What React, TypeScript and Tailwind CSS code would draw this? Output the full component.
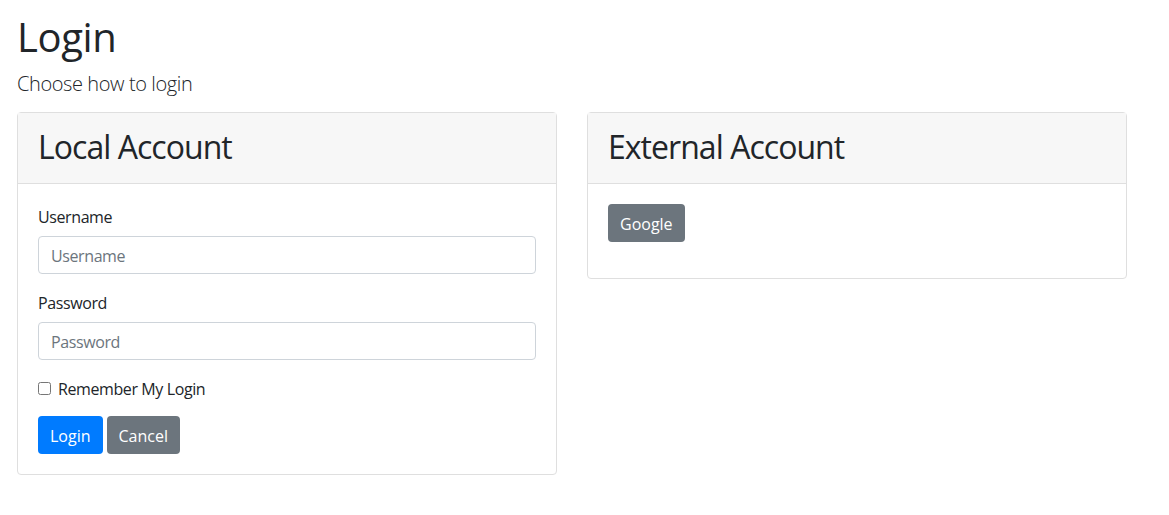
export default function App() {
  return (
    <div className="min-h-screen bg-white px-[17px] pt-[13px] tracking-[-0.025em] text-[#212529] font-['Open_Sans','Liberation_Sans',sans-serif]">
      <h1 className="mb-2 text-[40px] leading-[1.2] font-normal">Login</h1>
      <p className="mb-[13px] text-[20px] leading-[30px] font-light">Choose how to login</p>

      <div className="flex items-start gap-[30px]">
        {/* Local account */}
        <div className="w-[540px] rounded border border-[#dfdfdf] bg-white">
          <div className="border-b border-[#dfdfdf] bg-[#f7f7f7] px-5 pt-[15px] pb-3">
            <h2 className="mb-[5px] text-[32px] leading-[1.2] font-normal tracking-[-0.03em]">Local Account</h2>
          </div>
          <div className="p-5 text-base">
            <div className="mb-4">
              <label className="mb-[7px] block pt-px leading-6">Username</label>
              <input
                className="block h-[38px] w-full rounded border border-[#ced4da] px-3 pt-px text-base leading-6 tracking-[-0.025em] placeholder:text-[#6c757d] outline-none"
                placeholder="Username"
              />
            </div>
            <div className="mb-4">
              <label className="mb-[7px] block pt-px leading-6">Password</label>
              <input
                type="password"
                className="block h-[38px] w-full rounded border border-[#ced4da] px-3 pt-px text-base leading-6 tracking-[-0.025em] placeholder:text-[#6c757d] outline-none"
                placeholder="Password"
              />
            </div>
            <div className="mb-4 flex h-6 items-center">
              <input type="checkbox" className="m-0 h-[13px] w-[13px]" />
              <label className="ml-[7px] pt-px leading-6">Remember My Login</label>
            </div>
            <div className="flex gap-1">
              <button className="h-[38px] rounded bg-[#007bff] px-3 pt-px leading-6 tracking-normal text-white">Login</button>
              <button className="h-[38px] rounded bg-[#6c757d] px-3 pt-px leading-6 tracking-normal text-white">Cancel</button>
            </div>
          </div>
        </div>

        {/* External account */}
        <div className="w-[540px] rounded border border-[#dfdfdf] bg-white">
          <div className="border-b border-[#dfdfdf] bg-[#f7f7f7] px-5 pt-[15px] pb-3">
            <h2 className="mb-[5px] text-[32px] leading-[1.2] font-normal tracking-[-0.03em]">External Account</h2>
          </div>
          <div className="p-5">
            <ul className="mb-4 flex">
              <li>
                <button className="h-[38px] rounded bg-[#6c757d] px-3 pt-px leading-6 tracking-normal text-white">Google</button>
              </li>
            </ul>
          </div>
        </div>
      </div>
    </div>
  );
}
